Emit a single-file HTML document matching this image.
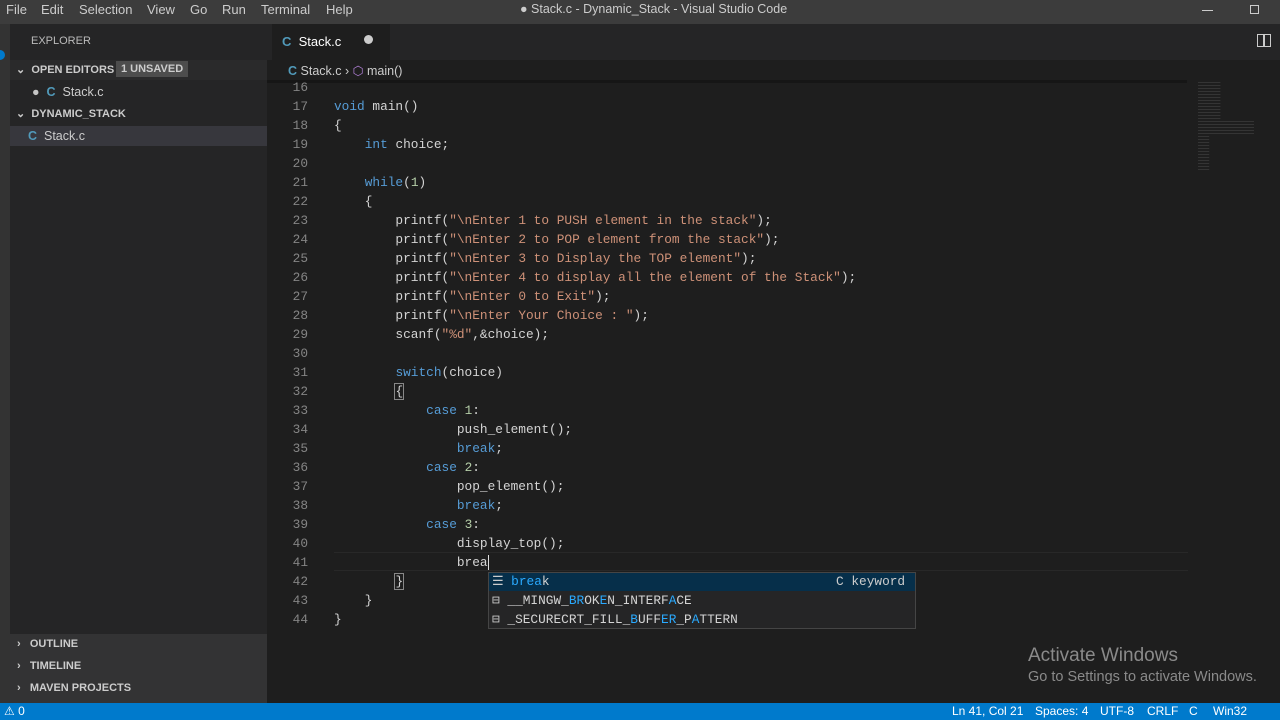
<!DOCTYPE html><html><head><style>
*{margin:0;padding:0;box-sizing:border-box}
body{width:1280px;height:720px;background:#1e1e1e;overflow:hidden;position:relative;font-family:"Liberation Sans",sans-serif;color:#ccc;font-size:13px}
.a{position:absolute;white-space:nowrap}
.code{font-family:"Liberation Mono",monospace;font-size:12.8px;white-space:pre;color:#d4d4d4}
.k{color:#569cd6}.s{color:#ce9178}.n{color:#b5cea8}
.ln{position:absolute;left:270px;width:38px;text-align:right;color:#858585;font-family:"Liberation Mono",monospace;font-size:12.8px}
.side{font-size:11px;font-weight:bold;color:#ccc}
.st{position:absolute;top:704px;color:#fff;font-size:12px;white-space:nowrap}
</style></head><body>
<div class="a" style="left:0;top:0;width:1280px;height:24px;background:#3c3c3c"></div>
<div class="a" style="left:6px;top:2px">File</div>
<div class="a" style="left:41px;top:2px">Edit</div>
<div class="a" style="left:79px;top:2px">Selection</div>
<div class="a" style="left:147px;top:2px">View</div>
<div class="a" style="left:190px;top:2px">Go</div>
<div class="a" style="left:222px;top:2px">Run</div>
<div class="a" style="left:261px;top:2px">Terminal</div>
<div class="a" style="left:326px;top:2px">Help</div>
<div class="a" style="left:520px;top:2px;font-size:12.5px">● Stack.c - Dynamic_Stack - Visual Studio Code</div>
<div class="a" style="left:1202px;top:10px;width:11px;height:1px;background:#ccc"></div>
<div class="a" style="left:1250px;top:5px;width:9px;height:9px;border:1px solid #ccc"></div>
<!-- sidebar -->
<div class="a" style="left:0;top:24px;width:10px;height:679px;background:#333"></div>
<div class="a" style="left:-5px;top:50px;width:10px;height:10px;border-radius:50%;background:#007acc"></div>
<div class="a" style="left:10px;top:24px;width:257px;height:679px;background:#252526"></div>
<div class="a" style="left:31px;top:35px;font-size:11px;color:#bbb">EXPLORER</div>
<div class="a" style="left:10px;top:60px;width:257px;height:20px;background:#2a2a2b"></div>
<div class="a side" style="left:16px;top:63px">⌄ &nbsp;OPEN EDITORS</div>
<div class="a side" style="left:116px;top:61px;background:#4d4d4d;padding:2px 5px">1 UNSAVED</div>
<div class="a" style="left:32px;top:85px;font-size:12.5px"><span style="color:#c5c5c5">●</span> &nbsp;<b style="color:#519aba">C</b> &nbsp;Stack.c</div>
<div class="a side" style="left:16px;top:107px">⌄ &nbsp;DYNAMIC_STACK</div>
<div class="a" style="left:10px;top:126px;width:257px;height:20px;background:#37373d"></div>
<div class="a" style="left:28px;top:129px;font-size:12.5px"><b style="color:#519aba">C</b> &nbsp;Stack.c</div>
<div class="a" style="left:10px;top:634px;width:257px;height:69px;background:#333334"></div>
<div class="a side" style="left:17px;top:638px">›&nbsp;&nbsp; OUTLINE</div>
<div class="a side" style="left:17px;top:660px">›&nbsp;&nbsp; TIMELINE</div>
<div class="a side" style="left:17px;top:682px">›&nbsp;&nbsp; MAVEN PROJECTS</div>
<!-- tabs -->
<div class="a" style="left:267px;top:24px;width:1013px;height:36px;background:#252526"></div>
<div class="a" style="left:272px;top:24px;width:118px;height:36px;background:#1e1e1e"></div>
<div class="a" style="left:282px;top:34px;font-size:13px"><b style="color:#519aba">C</b> &nbsp;<span style="color:#fff">Stack.c</span></div>
<div class="a" style="left:364px;top:35px;width:9px;height:9px;border-radius:50%;background:#ccc"></div>
<div class="a" style="left:1257px;top:34px;width:14px;height:13px;border:1.5px solid #ccc"></div>
<div class="a" style="left:1263px;top:34px;width:1.5px;height:13px;background:#ccc"></div>
<div class="a" style="left:288px;top:63px;font-size:12.5px"><b style="color:#519aba">C</b> Stack.c › <span style="color:#b180d7">⬡</span> main()</div>
<div class="a" style="left:267px;top:80px;width:920px;height:3px;background:#161616"></div>
<!-- code -->
<div class="a" style="left:334px;top:552px;width:854px;height:19px;border-top:1px solid #282828;border-bottom:1px solid #282828"></div>
<div id="lines"></div>
<div class="a" style="left:1198px;top:80px;width:56px;height:90px;opacity:.25;background:repeating-linear-gradient(#1e1e1e 0 2px,#777 2px 3px);clip-path:polygon(0 0,40% 0,40% 45%,100% 45%,100% 60%,20% 60%,20% 100%,0 100%)"></div>
<!-- suggest -->
<div class="a code" style="left:488px;top:572px;width:428px;height:57px;background:#252526;border:1px solid #454545"></div>
<div class="a" style="left:489px;top:573px;width:426px;height:18px;background:#062f4a"></div>
<div class="a code" style="left:492px;top:574px"><span style="color:#ccc">☰</span> <span style="color:#2aaaff">brea</span>k</div>
<div class="a code" style="left:836px;top:574px;color:#ccc">C keyword</div>
<div class="a code" style="left:492px;top:593px"><span style="color:#ccc">⊟</span> __MINGW_<span style="color:#2aaaff">BR</span>OK<span style="color:#2aaaff">E</span>N_INTERF<span style="color:#2aaaff">A</span>CE</div>
<div class="a code" style="left:492px;top:612px"><span style="color:#ccc">⊟</span> _SECURECRT_FILL_<span style="color:#2aaaff">B</span>UFF<span style="color:#2aaaff">ER</span>_P<span style="color:#2aaaff">A</span>TTERN</div>
<div class="a" style="left:1028px;top:645px;font-size:19px;color:#8a8a8a">Activate Windows</div>
<div class="a" style="left:1028px;top:669px;font-size:14.5px;color:#8a8a8a">Go to Settings to activate Windows.</div>
<!-- status -->
<div class="a" style="left:0;top:703px;width:1280px;height:17px;background:#007acc"></div>
<div class="st" style="left:4px">⚠ 0</div>
<div class="st" style="left:952px">Ln 41, Col 21</div>
<div class="st" style="left:1035px">Spaces: 4</div>
<div class="st" style="left:1100px">UTF-8</div>
<div class="st" style="left:1147px">CRLF</div>
<div class="st" style="left:1189px">C</div>
<div class="st" style="left:1213px">Win32</div>
<script>
var L=["","<span class=k>void</span> main()","{","    <span class=k>int</span> choice;","","    <span class=k>while</span>(<span class=n>1</span>)","    {",
'        printf(<span class=s>"\\nEnter 1 to PUSH element in the stack"</span>);',
'        printf(<span class=s>"\\nEnter 2 to POP element from the stack"</span>);',
'        printf(<span class=s>"\\nEnter 3 to Display the TOP element"</span>);',
'        printf(<span class=s>"\\nEnter 4 to display all the element of the Stack"</span>);',
'        printf(<span class=s>"\\nEnter 0 to Exit"</span>);',
'        printf(<span class=s>"\\nEnter Your Choice : "</span>);',
'        scanf(<span class=s>"%d"</span>,&amp;choice);',"",
"        <span class=k>switch</span>(choice)","        <span style='outline:1px solid #888'>{</span>",
"            <span class=k>case</span> <span class=n>1</span>:","                push_element();","                <span class=k>break</span>;",
"            <span class=k>case</span> <span class=n>2</span>:","                pop_element();","                <span class=k>break</span>;",
"            <span class=k>case</span> <span class=n>3</span>:","                display_top();","                brea<span style='border-left:1.5px solid #ddd'></span>",
"        <span style='outline:1px solid #888'>}</span>","    }","}"];
var h="";for(var i=0;i<L.length;i++){var y=80+i*19;h+='<div class="ln" style="top:'+y+'px">'+(16+i)+'</div><div class="a code" style="left:334px;top:'+y+'px">'+L[i]+'</div>';}
document.getElementById("lines").innerHTML=h;
</script>
</body></html>
